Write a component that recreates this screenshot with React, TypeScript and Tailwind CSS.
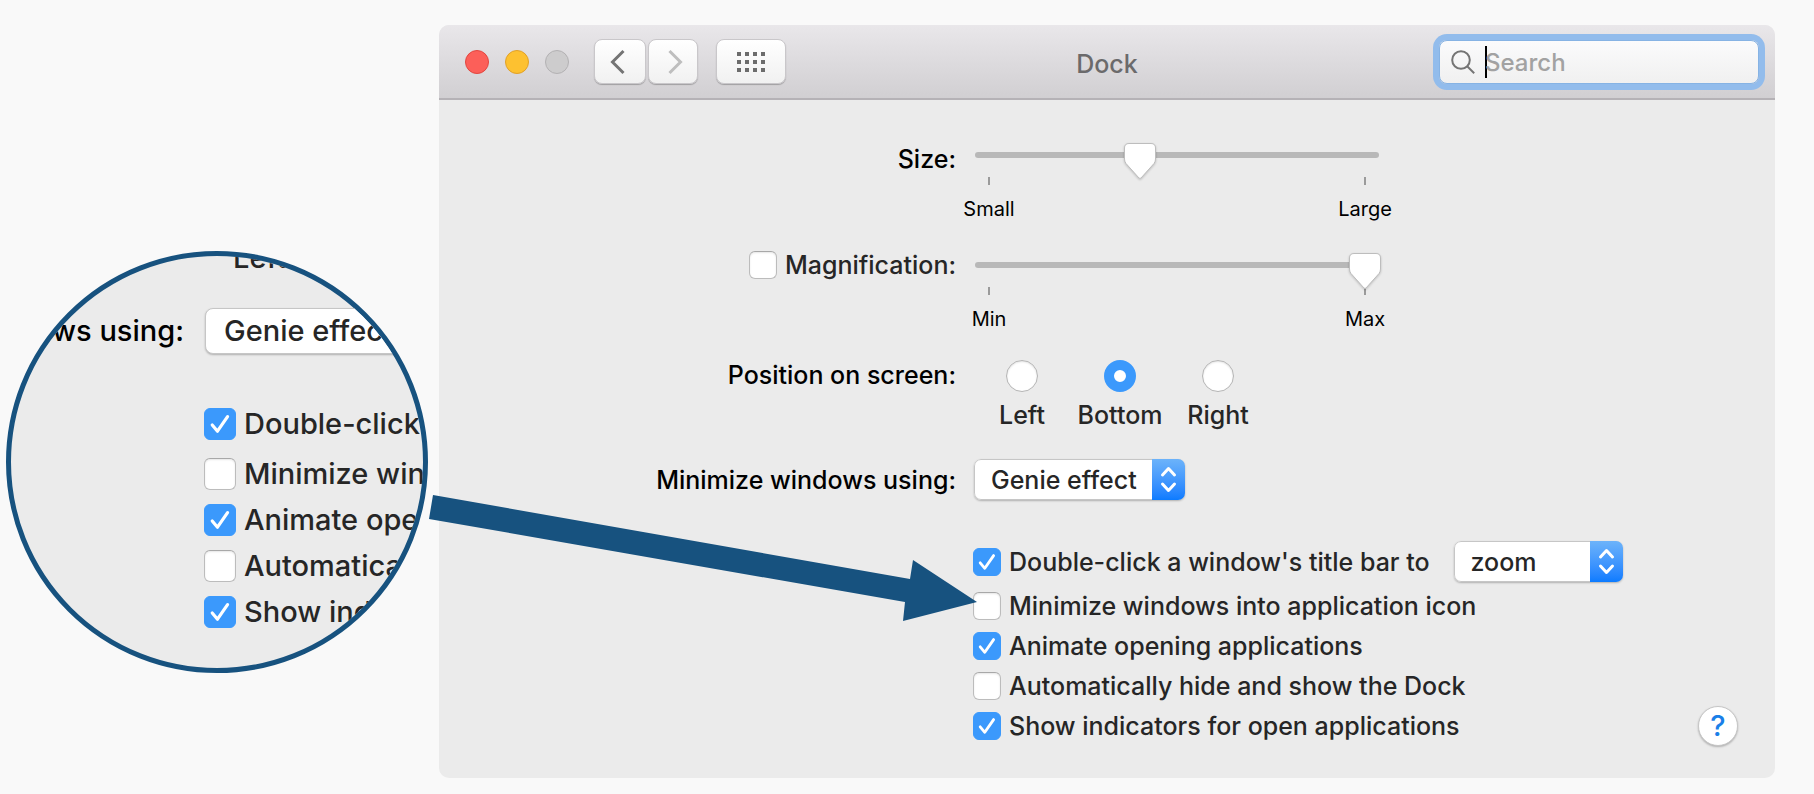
import React, { useId, useState } from 'react';
import clsx from 'clsx';

interface TickBoxProps {
  label: string;
  defaultChecked?: boolean;
  large?: boolean;
}

const TickBox: React.FC<TickBoxProps> = ({ label, defaultChecked, large }) => (
  <label className="flex items-center gap-2 whitespace-nowrap text-[#262626]">
    <span className={clsx('grid shrink-0', large ? 'size-8' : 'size-7')}>
      <input
        type="checkbox"
        defaultChecked={defaultChecked}
        className="peer col-start-1 row-start-1 size-full appearance-none rounded-[6px] border border-[#bcbcbc] border-t-[#a8a8a8] bg-white shadow-[inset_0_1px_2px_#0000001a] checked:border-[#3b99fc] checked:bg-[#3b99fc] checked:shadow-none"
      />
      <svg
        viewBox="0 0 28 28"
        className="pointer-events-none invisible col-start-1 row-start-1 size-full peer-checked:visible"
        fill="none"
        stroke="#fff"
        strokeWidth="2.8"
        strokeLinecap="round"
        strokeLinejoin="round"
      >
        <path d="M7.2 14.8 11.8 20.3 20.6 7.6" />
      </svg>
    </span>
    {label}
  </label>
);

interface PopUpProps {
  options: string[];
  label?: string;
  id?: string;
  className: string;
}

const PopUp: React.FC<PopUpProps> = ({ options, label, id, className }) => (
  <div className={clsx('relative flex h-[41px] overflow-hidden rounded-[7px] shadow-[0_1px_2px_#00000040]', className)}>
    <select
      id={id}
      aria-label={label}
      className="min-w-0 flex-1 appearance-none rounded-[7px] border border-[#c6c6c6] bg-white pl-4 text-[#262626] outline-none"
    >
      {options.map((option) => (
        <option key={option}>{option}</option>
      ))}
    </select>
    <svg
      viewBox="0 0 33 41"
      className="pointer-events-none absolute right-0 h-full w-[33px] bg-linear-to-b from-[#6cb3fa] to-[#0a7bff]"
      fill="none"
      stroke="#fff"
      strokeWidth="3"
      strokeLinecap="round"
      strokeLinejoin="round"
    >
      <path d="M10.5 16 16.5 9.5 22.5 16M10.5 25 16.5 31.5 22.5 25" />
    </svg>
  </div>
);

interface SliderProps {
  label: string;
  min: number;
  max: number;
  initial: number;
  low: string;
  high: string;
}

const Slider: React.FC<SliderProps> = ({ label, min, max, initial, low, high }) => {
  const [value, setValue] = useState(initial);
  const percent = ((value - min) / (max - min)) * 100;

  return (
    <div className="w-[408px]">
      <div className="relative h-[34px] pt-[9px]">
        <div className="mx-[2px] h-[6px] rounded-full bg-[#b8b8b8]" />
        <div className="pointer-events-none absolute inset-x-4 top-0 z-10">
          <svg
            viewBox="0 0 32 38"
            className="absolute top-0 h-[38px] w-8 -translate-x-1/2 drop-shadow-[0_1px_1px_#00000033]"
            style={{ left: `${percent}%` }}
          >
            <path
              d="M5 .5H27Q31.500 .5 31.500 5V16Q31.500 18.500 30 20.500L17 35Q16 36 15 35L2 20.500Q.5 18.500 .5 16V5Q.5 .5 5 .5Z"
              fill="#fff"
              stroke="#bdbdbd"
            />
          </svg>
        </div>
        <input
          type="range"
          aria-label={label}
          min={min}
          max={max}
          value={value}
          onChange={(e) => setValue(Number(e.target.value))}
          className="absolute inset-0 m-0 w-full opacity-0"
        />
      </div>
      <div className="mx-[15px] flex h-2 justify-between">
        <span className="w-[2px] bg-[#9a9a9a]" />
        <span className="w-[2px] bg-[#9a9a9a]" />
      </div>
      <div className="-mx-[14px] mt-3 flex justify-between text-[20px] leading-6 font-normal">
        <span className="w-[60px] text-center">{low}</span>
        <span className="w-[60px] text-center">{high}</span>
      </div>
    </div>
  );
};

const POSITIONS = ['Left', 'Bottom', 'Right'];

const PositionPicker: React.FC = () => {
  const [position, setPosition] = useState('Bottom');

  return (
    <div role="radiogroup" aria-label="Position on screen" className="flex text-[#262626]">
      {POSITIONS.map((name) => (
        <label key={name} className="flex w-[98px] flex-col items-center gap-[7px] leading-8">
          <input
            type="radio"
            name="position"
            checked={position === name}
            onChange={() => setPosition(name)}
            className="size-8 appearance-none rounded-full border border-[#b5b5b5] bg-white shadow-[inset_0_1px_2px_#0000001f] checked:border-10 checked:border-[#3b99fc] checked:shadow-none"
          />
          {name}
        </label>
      ))}
    </div>
  );
};

const Toolbar: React.FC = () => (
  <header className="grid h-[75px] grid-cols-[1fr_auto_1fr] items-center border-b-2 border-[#b5b2b6] bg-linear-to-b from-[#e9e7ea] to-[#d1cfd2]">
    <div className="flex items-center pl-[26px]">
      <div className="flex gap-4">
        <button aria-label="Close" className="size-6 rounded-full border border-[#e2463f] bg-[#fc5f59]" />
        <button aria-label="Minimize" className="size-6 rounded-full border border-[#e0a028] bg-[#fdc130]" />
        <button aria-label="Zoom" className="size-6 rounded-full border border-[#b3b1b3] bg-[#cdcccd]" />
      </div>
      <div className="ml-[25px] flex gap-[2px]">
        <button
          aria-label="Back"
          className="flex h-[45px] w-[52px] items-center justify-center rounded-[8px] border border-[#c9c7ca] bg-linear-to-b from-white to-[#f1f1f1] pr-1 shadow-[0_1px_1px_#00000040]"
        >
          <svg viewBox="0 0 16 26" className="h-[26px] w-4" fill="none" stroke="#747474" strokeWidth="3">
            <path d="M13.500 2 2.500 13 13.500 24" />
          </svg>
        </button>
        <button
          aria-label="Forward"
          className="flex h-[45px] w-[50px] items-center justify-center rounded-[8px] border border-[#c9c7ca] bg-linear-to-b from-white to-[#f1f1f1] pl-1 shadow-[0_1px_1px_#00000040]"
        >
          <svg viewBox="0 0 16 26" className="h-[26px] w-4" fill="none" stroke="#bebebe" strokeWidth="3">
            <path d="M2.500 2 13.500 13 2.500 24" />
          </svg>
        </button>
      </div>
      <button
        aria-label="Show all"
        className="ml-[18px] flex h-[45px] w-[70px] items-center justify-center rounded-[8px] border border-[#c9c7ca] bg-linear-to-b from-white to-[#f1f1f1] shadow-[0_1px_1px_#00000040]"
      >
        <svg viewBox="0 0 28 20" className="h-5 w-7" fill="#6c6c6c">
          <path d="M0 0h4v4H0zM8 0h4v4H8zM16 0h4v4h-4zM24 0h4v4h-4zM0 8h4v4H0zM8 8h4v4H8zM16 8h4v4h-4zM24 8h4v4h-4zM0 16h4v4H0zM8 16h4v4H8zM16 16h4v4h-4zM24 16h4v4h-4z" />
        </svg>
      </button>
    </div>
    <h1 className="pt-1 text-[#6b6a6b]">Dock</h1>
    <label className="mr-4 flex h-11 w-80 items-center justify-self-end rounded-[8px] border border-[#86b3e4] bg-linear-to-b from-[#fbfbfc] to-[#f0f0f0] pl-[11px] shadow-[0_0_0_6px_#92bcec]">
      <svg viewBox="0 0 24 24" className="size-6 shrink-0" fill="none" stroke="#757575" strokeWidth="2">
        <circle cx="10" cy="10" r="8.800" />
        <path d="M16.200 16.200 23.200 23.200" />
      </svg>
      <span className="ml-[10px] h-8 w-[2px] shrink-0 bg-black" />
      <input
        type="search"
        aria-label="Search"
        placeholder="Search"
        className="-ml-[2px] min-w-0 flex-1 bg-transparent pt-[2px] text-[24px] outline-none placeholder:text-[#a2a2a2]"
      />
    </label>
  </header>
);

const Magnifier: React.FC = () => (
  <div className="mt-[226px] ml-[6px] h-[422px] w-[422px] shrink-0 overflow-hidden rounded-full border-5 border-[#17527f] bg-[#ebebeb] text-[29px] leading-9">
    <div className="-mt-4 pl-[222px] text-[#262626]">Left</div>
    <div className="mt-8 flex items-center">
      <label htmlFor="lens-effect" className="flex w-[173px] shrink-0 justify-end whitespace-nowrap text-black">
        windows using:
      </label>
      <select
        id="lens-effect"
        className="ml-[21px] h-[46px] w-[210px] shrink-0 appearance-none rounded-[8px] border border-[#c6c6c6] bg-white pl-[18px] text-[#262626] shadow-[0_1px_2px_#00000040]"
      >
        <option>Genie effect</option>
      </select>
    </div>
    <div className="mt-[52px] flex flex-col gap-[10px] pl-[193px]">
      <div className="mb-1">
        <TickBox large defaultChecked label="Double-click" />
      </div>
      <TickBox large label="Minimize windows" />
      <TickBox large defaultChecked label="Animate opening" />
      <TickBox large label="Automatically" />
      <TickBox large defaultChecked label="Show indicators" />
    </div>
  </div>
);

export default function App() {
  const effectId = useId();

  return (
    <main className="relative flex min-h-screen items-start bg-[#f9f9f9] pt-[25px] pr-[39px] pb-4 font-[Inter,sans-serif] text-[25px] leading-8 font-[450] text-black">
      <div className="w-[439px] shrink-0">
        <Magnifier />
      </div>

      <section className="min-w-0 flex-1 overflow-hidden rounded-[10px] bg-[#ebebeb]">
        <Toolbar />
        <div className="grid grid-cols-[517px_1fr] gap-x-[17px] pt-[43px]">
          <div className="text-right">Size:</div>
          <Slider label="Size" min={16} max={128} initial={61} low="Small" high="Large" />

          <div className="mt-7 flex items-start justify-end">
            <TickBox label="Magnification:" />
          </div>
          <div className="mt-8">
            <Slider label="Magnification" min={16} max={128} initial={128} low="Min" high="Max" />
          </div>

          <div className="mt-7 text-right">Position on screen:</div>
          <div className="mt-[29px]">
            <PositionPicker />
          </div>

          <label htmlFor={effectId} className="mt-7 self-center text-right">
            Minimize windows using:
          </label>
          <PopUp id={effectId} options={['Genie effect', 'Scale effect']} className="mt-7 ml-px w-[211px]" />

          <div className="col-start-2 mt-[41px]">
            <div className="mb-2 flex items-center gap-6">
              <TickBox defaultChecked label="Double-click a window's title bar to" />
              <PopUp label="Title bar double-click action" options={['zoom', 'minimize']} className="w-[169px] shrink-0" />
            </div>
            <div className="flex flex-col gap-2">
              <TickBox label="Minimize windows into application icon" />
              <TickBox defaultChecked label="Animate opening applications" />
              <TickBox label="Automatically hide and show the Dock" />
              <div className="flex h-8 items-center justify-between pr-[37px]">
                <TickBox defaultChecked label="Show indicators for open applications" />
                <button
                  aria-label="Help"
                  className="size-10 shrink-0 rounded-full border border-[#c6c6c6] bg-white text-[29px] leading-9 text-[#1a7fe8] shadow-[0_1px_2px_#00000040]"
                >
                  ?
                </button>
              </div>
            </div>
          </div>
        </div>
        <div className="h-9" />
      </section>

      {/* callout arrow from the lens to the second tick box */}
      <svg viewBox="0 0 550 128" className="pointer-events-none absolute top-[495px] left-[429px] h-32 w-[550px]" fill="#17527f">
        <path d="M4 0 481 84 484 65 548 107 474 126 476 107 0 24Z" />
      </svg>
    </main>
  );
}
